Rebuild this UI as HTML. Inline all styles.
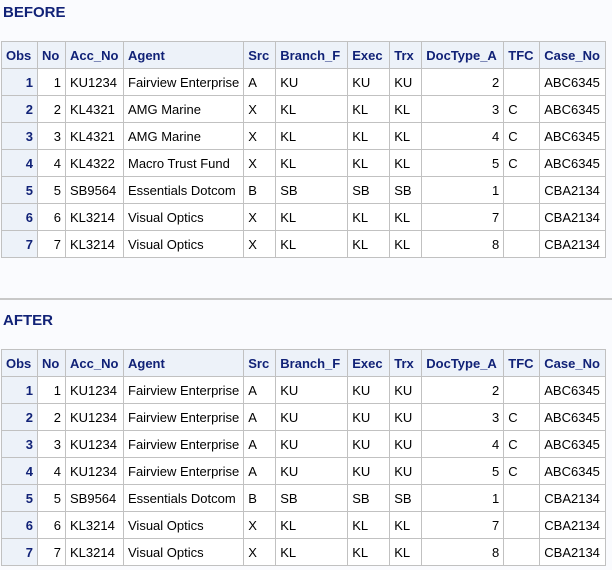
<!DOCTYPE html>
<html><head><style>
body{margin:0;background:#fafbfe;width:612px;height:570px;overflow:hidden;position:relative;font-family:"Liberation Sans",Arial,sans-serif;}
.t{position:absolute;left:3px;font-size:15px;font-weight:bold;color:#112277;}
table{position:absolute;left:1px;border-collapse:collapse;font-size:13px;background:#fff;table-layout:fixed;}
td,th{border:1px solid #c1c1c1;height:26px;padding:0 4px;white-space:nowrap;color:#000;font-weight:normal;text-align:left;}
th{background:#edf2f9;color:#112277;font-weight:bold;}
td.o{background:#edf2f9;color:#112277;font-weight:bold;text-align:right;}
td.r{text-align:right;}
.sep{position:absolute;left:0;top:298px;width:612px;height:2px;background:#c8c8c8;}
</style></head><body>
<div class="t" style="top:4px">BEFORE</div>
<table style="top:41px">
<colgroup><col style="width:36px"><col style="width:28px"><col style="width:58px"><col style="width:120px"><col style="width:32px"><col style="width:72px"><col style="width:42px"><col style="width:32px"><col style="width:82px"><col style="width:36px"><col style="width:66px"></colgroup>
<tr><th>Obs</th><th>No</th><th>Acc_No</th><th>Agent</th><th>Src</th><th>Branch_F</th><th>Exec</th><th>Trx</th><th>DocType_A</th><th>TFC</th><th>Case_No</th></tr>
<tr><td class="o">1</td><td class="r">1</td><td>KU1234</td><td>Fairview Enterprise</td><td>A</td><td>KU</td><td>KU</td><td>KU</td><td class="r">2</td><td></td><td>ABC6345</td></tr>
<tr><td class="o">2</td><td class="r">2</td><td>KL4321</td><td>AMG Marine</td><td>X</td><td>KL</td><td>KL</td><td>KL</td><td class="r">3</td><td>C</td><td>ABC6345</td></tr>
<tr><td class="o">3</td><td class="r">3</td><td>KL4321</td><td>AMG Marine</td><td>X</td><td>KL</td><td>KL</td><td>KL</td><td class="r">4</td><td>C</td><td>ABC6345</td></tr>
<tr><td class="o">4</td><td class="r">4</td><td>KL4322</td><td>Macro Trust Fund</td><td>X</td><td>KL</td><td>KL</td><td>KL</td><td class="r">5</td><td>C</td><td>ABC6345</td></tr>
<tr><td class="o">5</td><td class="r">5</td><td>SB9564</td><td>Essentials Dotcom</td><td>B</td><td>SB</td><td>SB</td><td>SB</td><td class="r">1</td><td></td><td>CBA2134</td></tr>
<tr><td class="o">6</td><td class="r">6</td><td>KL3214</td><td>Visual Optics</td><td>X</td><td>KL</td><td>KL</td><td>KL</td><td class="r">7</td><td></td><td>CBA2134</td></tr>
<tr><td class="o">7</td><td class="r">7</td><td>KL3214</td><td>Visual Optics</td><td>X</td><td>KL</td><td>KL</td><td>KL</td><td class="r">8</td><td></td><td>CBA2134</td></tr>
</table>
<div class="sep"></div>
<div class="t" style="top:312px">AFTER</div>
<table style="top:349px">
<colgroup><col style="width:36px"><col style="width:28px"><col style="width:58px"><col style="width:120px"><col style="width:32px"><col style="width:72px"><col style="width:42px"><col style="width:32px"><col style="width:82px"><col style="width:36px"><col style="width:66px"></colgroup>
<tr><th>Obs</th><th>No</th><th>Acc_No</th><th>Agent</th><th>Src</th><th>Branch_F</th><th>Exec</th><th>Trx</th><th>DocType_A</th><th>TFC</th><th>Case_No</th></tr>
<tr><td class="o">1</td><td class="r">1</td><td>KU1234</td><td>Fairview Enterprise</td><td>A</td><td>KU</td><td>KU</td><td>KU</td><td class="r">2</td><td></td><td>ABC6345</td></tr>
<tr><td class="o">2</td><td class="r">2</td><td>KU1234</td><td>Fairview Enterprise</td><td>A</td><td>KU</td><td>KU</td><td>KU</td><td class="r">3</td><td>C</td><td>ABC6345</td></tr>
<tr><td class="o">3</td><td class="r">3</td><td>KU1234</td><td>Fairview Enterprise</td><td>A</td><td>KU</td><td>KU</td><td>KU</td><td class="r">4</td><td>C</td><td>ABC6345</td></tr>
<tr><td class="o">4</td><td class="r">4</td><td>KU1234</td><td>Fairview Enterprise</td><td>A</td><td>KU</td><td>KU</td><td>KU</td><td class="r">5</td><td>C</td><td>ABC6345</td></tr>
<tr><td class="o">5</td><td class="r">5</td><td>SB9564</td><td>Essentials Dotcom</td><td>B</td><td>SB</td><td>SB</td><td>SB</td><td class="r">1</td><td></td><td>CBA2134</td></tr>
<tr><td class="o">6</td><td class="r">6</td><td>KL3214</td><td>Visual Optics</td><td>X</td><td>KL</td><td>KL</td><td>KL</td><td class="r">7</td><td></td><td>CBA2134</td></tr>
<tr><td class="o">7</td><td class="r">7</td><td>KL3214</td><td>Visual Optics</td><td>X</td><td>KL</td><td>KL</td><td>KL</td><td class="r">8</td><td></td><td>CBA2134</td></tr>
</table>
</body></html>
